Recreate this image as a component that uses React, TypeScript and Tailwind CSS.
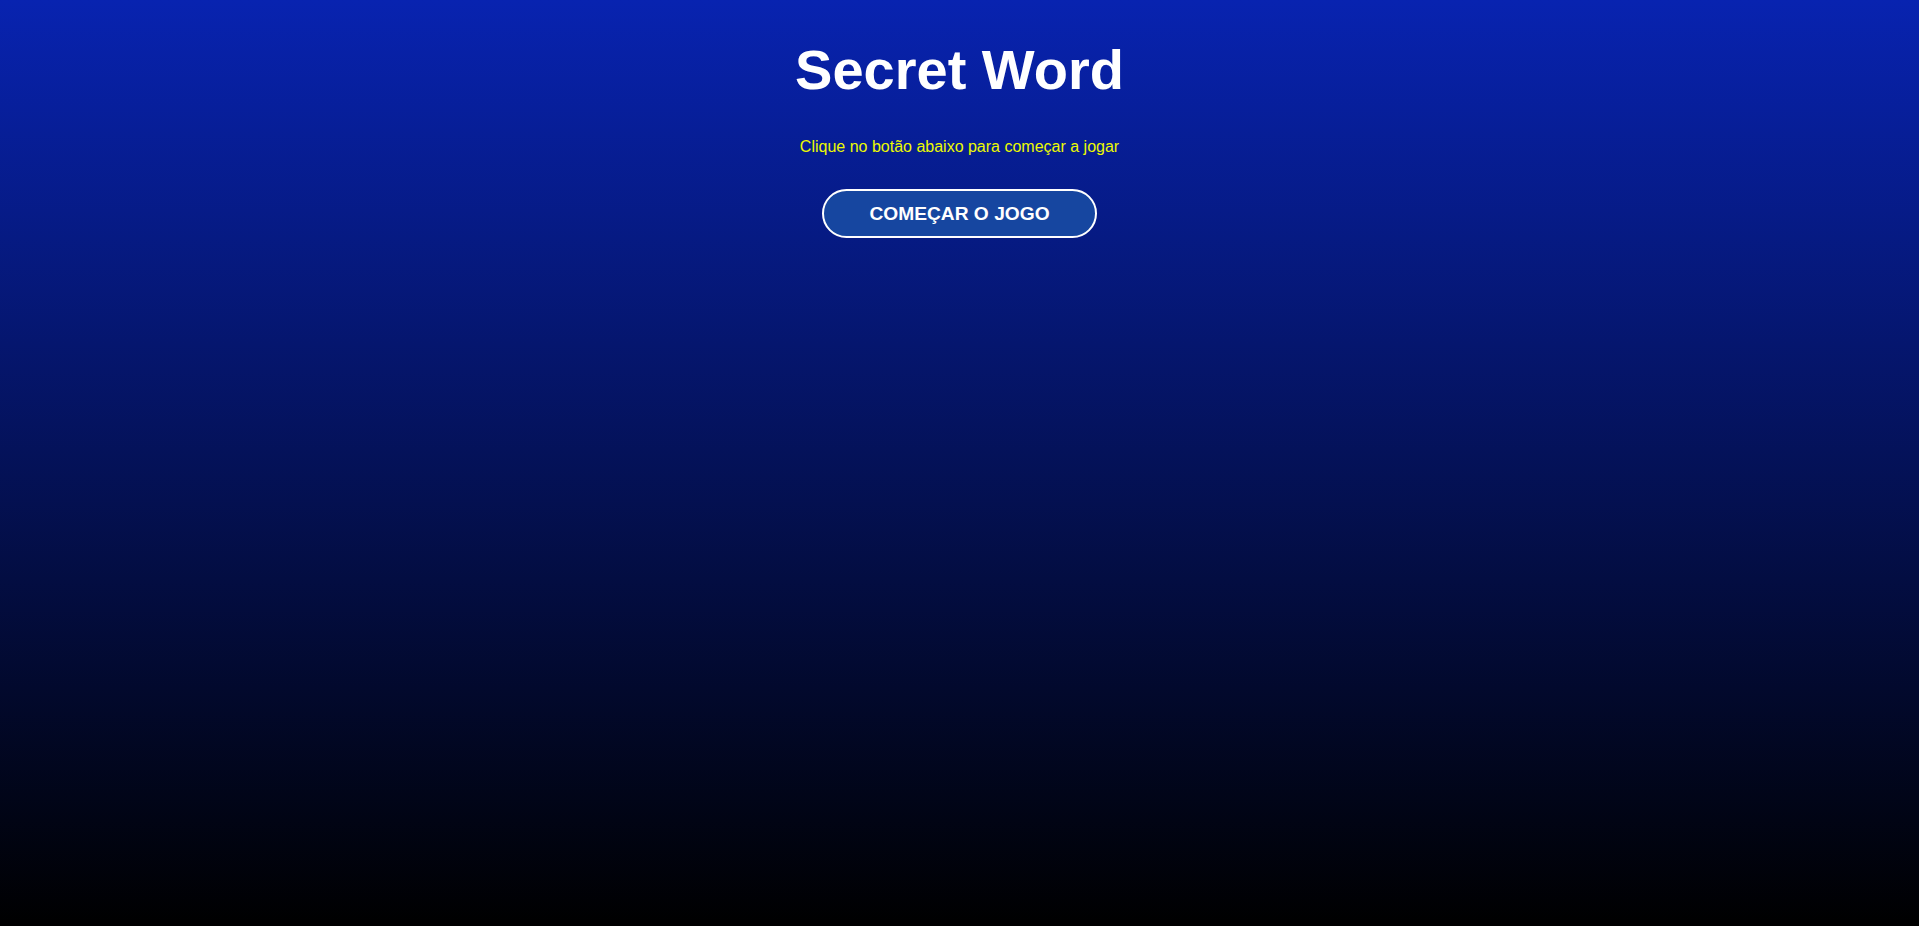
export default function App() {
  return (
    <div className="min-h-screen w-full bg-[linear-gradient(180deg,#0823b0_0%,#000000_100%)] text-center text-white font-['Liberation_Sans',Arial,sans-serif]">
      <div className="flex flex-col items-center pt-[38px]">
        <h1 className="text-[56px] font-bold leading-[64px]">Secret Word</h1>
        <p className="mt-[36px] text-base leading-[18px] text-[#ecfa00]">
          Clique no botão abaixo para começar a jogar
        </p>
        <button className="mt-[33px] h-[49px] rounded-full border-2 border-white bg-[#1646a0] px-[45px] text-[19.2px] font-bold uppercase leading-[22px] text-white">
          Começar o jogo
        </button>
      </div>
    </div>
  );
}
